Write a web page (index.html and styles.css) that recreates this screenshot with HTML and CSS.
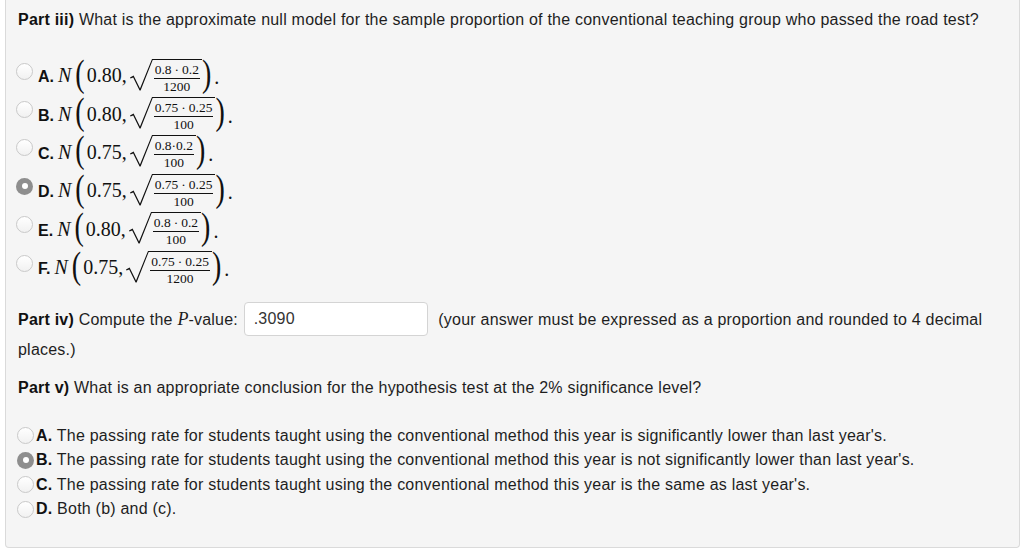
FILE: index.html
```html
<!DOCTYPE html>
<html>
<head>
<meta charset="utf-8">
<link rel="stylesheet" href="styles.css">
</head>
<body>
<div class="panel">
  <p class="q"><b>Part iii)</b> What is the approximate null model for the sample proportion of the conventional teaching group who passed the road test?</p>

  <div class="models">
    <div class="mrow"><span class="radio"></span><b class="lbl">A.</b><span class="math"><i class="nn">N</i><span class="paren">(</span><span class="num">0.80,</span><span class="sqrt"><svg class="rad" viewBox="0 0 24 32" width="24" height="32"><path d="M1 18.6 L4.6 16.4 L11 29.6 L22.9 0.2 L24 0.2 L11.6 31.6 L10.6 31.6 L4.2 18.6 L1.5 19.6 Z"/></svg><span class="radicand"><span class="frac"><span class="fn">0.8<span class="op">·</span>0.2</span><span class="fd">1200</span></span></span></span><span class="paren">)</span><span class="dot">.</span></span></div>

    <div class="mrow"><span class="radio"></span><b class="lbl">B.</b><span class="math"><i class="nn">N</i><span class="paren">(</span><span class="num">0.80,</span><span class="sqrt"><svg class="rad" viewBox="0 0 24 32" width="24" height="32"><path d="M1 18.6 L4.6 16.4 L11 29.6 L22.9 0.2 L24 0.2 L11.6 31.6 L10.6 31.6 L4.2 18.6 L1.5 19.6 Z"/></svg><span class="radicand"><span class="frac"><span class="fn">0.75<span class="op">·</span>0.25</span><span class="fd">100</span></span></span></span><span class="paren">)</span><span class="dot">.</span></span></div>

    <div class="mrow"><span class="radio"></span><b class="lbl">C.</b><span class="math"><i class="nn">N</i><span class="paren">(</span><span class="num">0.75,</span><span class="sqrt"><svg class="rad" viewBox="0 0 24 32" width="24" height="32"><path d="M1 18.6 L4.6 16.4 L11 29.6 L22.9 0.2 L24 0.2 L11.6 31.6 L10.6 31.6 L4.2 18.6 L1.5 19.6 Z"/></svg><span class="radicand"><span class="frac"><span class="fn">0.8·0.2</span><span class="fd">100</span></span></span></span><span class="paren">)</span><span class="dot">.</span></span></div>

    <div class="mrow"><span class="radio checked"></span><b class="lbl">D.</b><span class="math"><i class="nn">N</i><span class="paren">(</span><span class="num">0.75,</span><span class="sqrt"><svg class="rad" viewBox="0 0 24 32" width="24" height="32"><path d="M1 18.6 L4.6 16.4 L11 29.6 L22.9 0.2 L24 0.2 L11.6 31.6 L10.6 31.6 L4.2 18.6 L1.5 19.6 Z"/></svg><span class="radicand"><span class="frac"><span class="fn">0.75<span class="op">·</span>0.25</span><span class="fd">100</span></span></span></span><span class="paren">)</span><span class="dot">.</span></span></div>

    <div class="mrow"><span class="radio"></span><b class="lbl">E.</b><span class="math"><i class="nn">N</i><span class="paren">(</span><span class="num">0.80,</span><span class="sqrt"><svg class="rad" viewBox="0 0 24 32" width="24" height="32"><path d="M1 18.6 L4.6 16.4 L11 29.6 L22.9 0.2 L24 0.2 L11.6 31.6 L10.6 31.6 L4.2 18.6 L1.5 19.6 Z"/></svg><span class="radicand"><span class="frac"><span class="fn">0.8<span class="op">·</span>0.2</span><span class="fd">100</span></span></span></span><span class="paren">)</span><span class="dot">.</span></span></div>

    <div class="mrow"><span class="radio"></span><b class="lbl">F.</b><span class="math"><i class="nn">N</i><span class="paren">(</span><span class="num">0.75,</span><span class="sqrt"><svg class="rad" viewBox="0 0 24 32" width="24" height="32"><path d="M1 18.6 L4.6 16.4 L11 29.6 L22.9 0.2 L24 0.2 L11.6 31.6 L10.6 31.6 L4.2 18.6 L1.5 19.6 Z"/></svg><span class="radicand"><span class="frac"><span class="fn">0.75<span class="op">·</span>0.25</span><span class="fd">1200</span></span></span></span><span class="paren">)</span><span class="dot">.</span></span></div>
  </div>

  <p class="piv"><b>Part iv)</b> Compute the <i class="mp">P</i>-value: <span class="answer">.3090</span> (your answer must be expressed as a proportion and rounded to 4 decimal places.)</p>

  <p class="pv"><b>Part v)</b> What is an appropriate conclusion for the hypothesis test at the 2% significance level?</p>

  <div class="concl">
    <div class="crow"><span class="radio"></span><span><b>A.</b> The passing rate for students taught using the conventional method this year is significantly lower than last year's.</span></div>
    <div class="crow"><span class="radio checked"></span><span><b>B.</b> The passing rate for students taught using the conventional method this year is not significantly lower than last year's.</span></div>
    <div class="crow"><span class="radio"></span><span><b>C.</b> The passing rate for students taught using the conventional method this year is the same as last year's.</span></div>
    <div class="crow"><span class="radio"></span><span><b>D.</b> Both (b) and (c).</span></div>
  </div>
</div>
</body>
</html>
```

FILE: styles.css
```css
html, body {
  margin: 0;
  padding: 0;
  background: #ffffff;
}

body {
  font-family: "Liberation Sans", Arial, sans-serif;
  font-size: 16px;
  letter-spacing: 0.22px;
  color: #1e1e1e;
}

.panel {
  box-sizing: border-box;
  margin-left: 5px;
  width: 1015px;
  height: 548px;
  background: #f5f5f5;
  border: 1px solid #dadada;
  border-top: none;
  border-radius: 0 0 4px 4px;
  padding: 10px 12px 0 12px;
}

p {
  margin: 0;
  line-height: 20px;
}

b {
  color: #111;
}

/* ---------- Part iii models ---------- */
.models {
  margin-top: 26px;
  display: flex;
  flex-direction: column;
}

.mrow {
  height: 38.4px;
  display: flex;
  align-items: center;
}

.radio {
  box-sizing: border-box;
  flex: none;
  width: 17px;
  height: 17px;
  border-radius: 50%;
  border: 1px solid #c9c9c9;
  background: linear-gradient(#ffffff, #f1f1f1);
  display: flex;
  align-items: center;
  justify-content: center;
}

.radio.checked {
  border: none;
  background: #8e8e8e;
}

.radio.checked::after {
  content: "";
  width: 6px;
  height: 6px;
  border-radius: 50%;
  background: #ffffff;
}

.mrow .radio {
  margin-left: -2px;
  margin-right: 5px;
  margin-bottom: 8px;
}

.lbl {
  padding-top: 4px;
  margin-right: 4px;
  letter-spacing: 0;
}

.math {
  display: flex;
  align-items: center;
  font-family: "Liberation Serif", "Times New Roman", serif;
  font-size: 20px;
  line-height: 20px;
  letter-spacing: 0;
  color: #111;
}

.nn {
  font-style: italic;
  margin-right: 4px;
}

.paren {
  font-size: 28px;
  line-height: 28px;
  transform: scaleY(1.35);
  margin-top: -3px;
}

.num {
  margin-left: 2px;
  margin-right: 2px;
}

.sqrt {
  display: flex;
  align-items: flex-start;
  margin-top: 2px;
}

.rad {
  display: block;
  flex: none;
  fill: #111;
}

.radicand {
  border-top: 1.2px solid #111;
  padding: 3px 2px 0 2px;
  margin-left: -1px;
}

.frac {
  display: flex;
  flex-direction: column;
  align-items: center;
  font-size: 13.5px;
  line-height: 14px;
}

.fn {
  padding: 0 1px 1px 1px;
  border-bottom: 1px solid #111;
  align-self: stretch;
  text-align: center;
}

.fd {
  padding-top: 1px;
}

.op {
  margin: 0 3px;
}

.dot {
  margin-left: 3px;
  padding-top: 4px;
}

/* ---------- Part iv ---------- */
.piv {
  margin-top: 15.6px;
}

.mp {
  font-family: "Liberation Serif", "Times New Roman", serif;
  font-size: 18px;
  letter-spacing: 0;
}

.answer {
  box-sizing: border-box;
  display: inline-block;
  vertical-align: middle;
  width: 184px;
  height: 34px;
  line-height: 32px;
  margin: 0 6px 4px 1px;
  padding-left: 9px;
  background: #ffffff;
  border: 1px solid #d4d4d4;
  border-radius: 4px;
  color: #333;
}

/* ---------- Part v ---------- */
.pv {
  margin-top: 17.8px;
}

.concl {
  margin-top: 26px;
  display: flex;
  flex-direction: column;
}

.crow {
  height: 24.4px;
  display: flex;
  align-items: center;
}

.crow .radio {
  margin-left: -1px;
  margin-right: 2px;
}
```
